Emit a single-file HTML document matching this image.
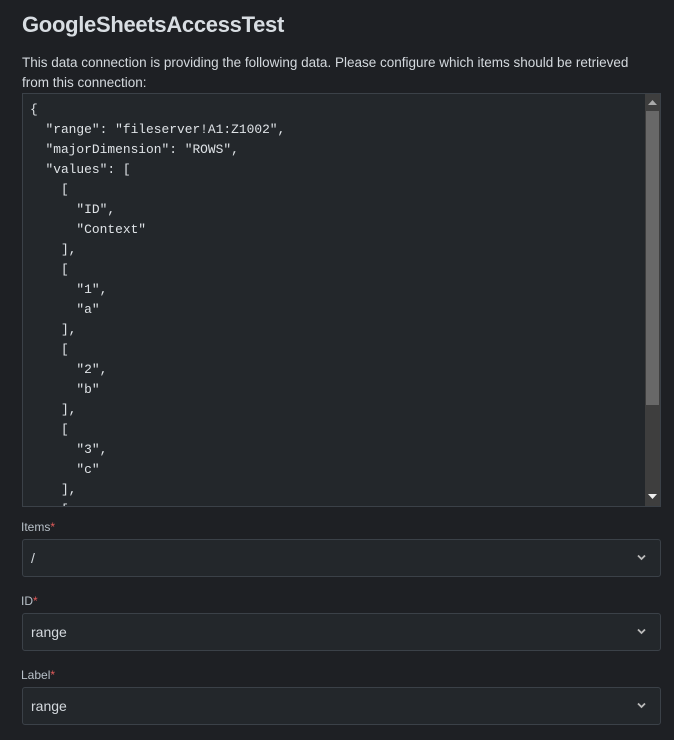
<html><head><style>
body{margin:0;background:#1e2024;width:674px;height:740px;overflow:hidden;font-family:"Liberation Sans",sans-serif;color:#dfe3e7}
h1{position:absolute;left:22px;top:12px;margin:0;font-size:22px;font-weight:bold;color:#d8dde2;letter-spacing:-0.3px}
.d{position:absolute;left:22px;top:53px;width:632px;font-size:13.5px;line-height:20px;color:#d4d9de}
.ta{position:absolute;left:22px;top:93px;width:637px;height:412px;border:1px solid #3b4148;background:#23272b;overflow:hidden}
pre{margin:0;position:absolute;left:7px;top:6px;font-family:"Liberation Mono",monospace;font-size:12.9px;line-height:20px;color:#dfe3e7}
.sb{position:absolute;right:0;top:0;width:15px;height:412px;background:#3e3e3e}
.th{position:absolute;left:1px;right:1px;top:17px;height:294px;background:#686868}
.lab{position:absolute;left:21px;font-size:12px;color:#b8c0c8}
.lab b{color:#e35b5b;font-weight:normal}
.sel{position:absolute;left:22px;width:637px;height:36px;border:1px solid #3b4148;border-radius:3px;background:#23272b;font-size:14px;line-height:36px;text-indent:8px;color:#d4d9de}
.sel svg{position:absolute;right:14px;top:14px}
</style></head><body>
<h1>GoogleSheetsAccessTest</h1>
<div class="d">This data connection is providing the following data. Please configure which items should be retrieved from this connection:</div>
<div class="ta"><pre>{
  "range": "fileserver!A1:Z1002",
  "majorDimension": "ROWS",
  "values": [
    [
      "ID",
      "Context"
    ],
    [
      "1",
      "a"
    ],
    [
      "2",
      "b"
    ],
    [
      "3",
      "c"
    ],
    [</pre>
<div class="sb"><div class="th"></div>
<svg style="position:absolute;left:3px;top:6px" width="9" height="5"><path d="M0 5L4.5 0L9 5Z" fill="#aaa"/></svg>
<svg style="position:absolute;left:3px;top:400px" width="9" height="5"><path d="M0 0L4.5 5L9 0Z" fill="#eee"/></svg></div></div>
<div class="lab" style="top:520px">Items<b>*</b></div>
<div class="sel" style="top:539px">/<svg width="9" height="7"><path d="M1 1.5L4.5 5L8 1.5" stroke="#bbb" stroke-width="1.8" fill="none"/></svg></div>
<div class="lab" style="top:594px">ID<b>*</b></div>
<div class="sel" style="top:613px">range<svg width="9" height="7"><path d="M1 1.5L4.5 5L8 1.5" stroke="#bbb" stroke-width="1.8" fill="none"/></svg></div>
<div class="lab" style="top:668px">Label<b>*</b></div>
<div class="sel" style="top:687px">range<svg width="9" height="7"><path d="M1 1.5L4.5 5L8 1.5" stroke="#bbb" stroke-width="1.8" fill="none"/></svg></div>
</body></html>
